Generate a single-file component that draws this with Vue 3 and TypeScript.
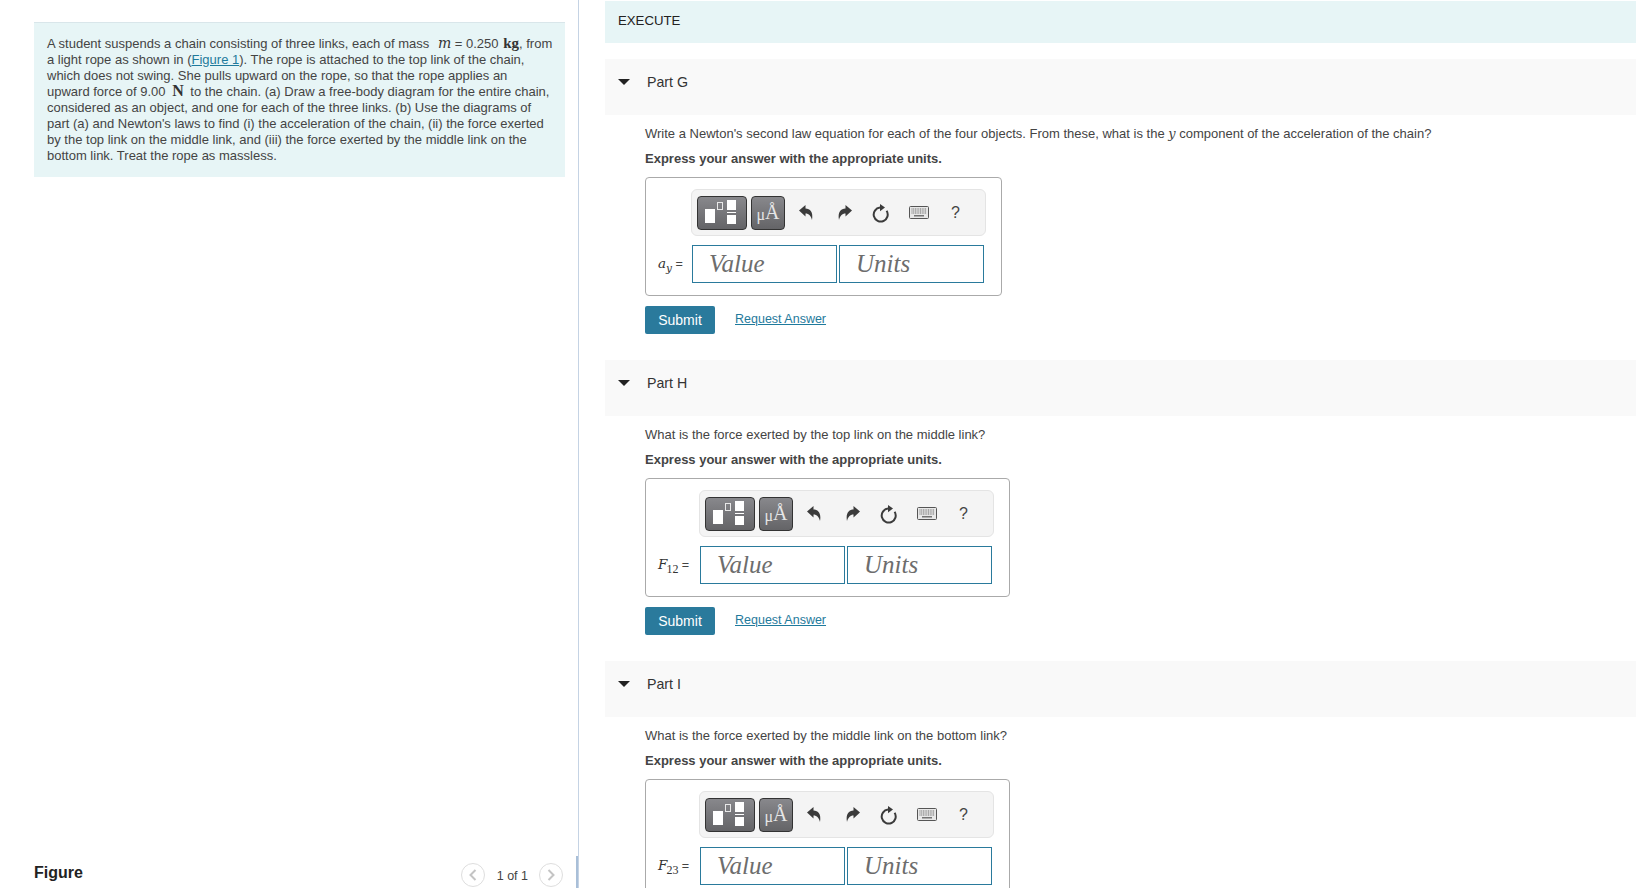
<script setup lang="ts">
interface Part {
  name: string;
  question: string;
  variable: string;
  sub: string;
  italicSub: boolean;
  wide: boolean;
  showActions: boolean;
}

const parts: Part[] = [
  {
    name: "Part G",
    question: "",
    variable: "a",
    sub: "y",
    italicSub: true,
    wide: false,
    showActions: true,
  },
  {
    name: "Part H",
    question: "What is the force exerted by the top link on the middle link?",
    variable: "F",
    sub: "12",
    italicSub: false,
    wide: true,
    showActions: true,
  },
  {
    name: "Part I",
    question: "What is the force exerted by the middle link on the bottom link?",
    variable: "F",
    sub: "23",
    italicSub: false,
    wide: true,
    showActions: false,
  },
];
</script>

<template>
  <div class="page">
    <aside class="left">
      <div class="intro">
        <div class="line">A student suspends a chain consisting of three links, each of mass <span class="math-i m">m</span> = 0.250 <span class="math unit kg">kg</span>, from</div>
        <div class="line">a light rope as shown in (<a class="link" href="#">Figure 1</a>). The rope is attached to the top link of the chain,</div>
        <div class="line">which does not swing. She pulls upward on the rope, so that the rope applies an</div>
        <div class="line">upward force of 9.00 <span class="math unit newton">N</span> to the chain. (a) Draw a free-body diagram for the entire chain,</div>
        <div class="line">considered as an object, and one for each of the three links. (b) Use the diagrams of</div>
        <div class="line">part (a) and Newton's laws to find (i) the acceleration of the chain, (ii) the force exerted</div>
        <div class="line">by the top link on the middle link, and (iii) the force exerted by the middle link on the</div>
        <div class="line">bottom link. Treat the rope as massless.</div>
      </div>
      <div class="figure-bar">
        <strong class="figure-title">Figure</strong>
        <div class="pager">
          <button type="button" class="round" aria-label="Previous">
            <svg width="10" height="14" viewBox="0 0 10 14"><path d="M7.5 2 L2.5 7 L7.5 12" fill="none" stroke="#c4c4c4" stroke-width="2" /></svg>
          </button>
          <span class="count">1 of 1</span>
          <button type="button" class="round" aria-label="Next">
            <svg width="10" height="14" viewBox="0 0 10 14"><path d="M2.5 2 L7.5 7 L2.5 12" fill="none" stroke="#c4c4c4" stroke-width="2" /></svg>
          </button>
        </div>
      </div>
    </aside>

    <main class="right">
      <div class="execute">EXECUTE</div>

      <section v-for="part in parts" :key="part.name" class="part">
        <header class="part-head">
          <span class="caret"></span>
          <span class="part-name">{{ part.name }}</span>
        </header>

        <div class="part-body">
          <p class="question">
            <template v-if="part.question">{{ part.question }}</template>
            <template v-else>Write a Newton's second law equation for each of the four objects. From these, what is the <span class="math-i m-y">y</span> component of the acceleration of the chain?</template>
          </p>
          <p class="express">Express your answer with the appropriate units.</p>

          <div class="answer" :class="{ wide: part.wide }">
            <div class="toolbar">
              <button type="button" class="tool tool-template" aria-label="Templates">
                <svg width="48" height="32" viewBox="0 0 48 32">
                  <rect x="7" y="12" width="10" height="14" fill="#fff" />
                  <rect x="19.5" y="5.5" width="5" height="7" fill="none" stroke="#e8e8e8" />
                  <rect x="29" y="3" width="9" height="10" fill="#fff" />
                  <rect x="29" y="15" width="9" height="1" fill="#fff" />
                  <rect x="29" y="18" width="9" height="9" fill="#fff" />
                </svg>
              </button>
              <button type="button" class="tool tool-units"><span class="mu">μ</span><span class="ang">Å</span></button>
              <svg class="icon undo" width="16" height="18" viewBox="0 0 16 18"><path d="M1 6.5 L7.5 1 V4.5 C12 4.5 15.5 8 14 16 C13 12 11 9.5 7.5 9.5 V12.5 Z" fill="#3b3b3b" /></svg>
              <svg class="icon redo" width="16" height="18" viewBox="0 0 16 18"><path d="M15 6.5 L8.5 1 V4.5 C4 4.5 0.5 8 2 16 C3 12 5 9.5 8.5 9.5 V12.5 Z" fill="#3b3b3b" /></svg>
              <svg class="icon reset" width="18" height="20" viewBox="0 0 18 20"><path d="M14.6 7.8 A7 7 0 1 1 8 4.6" fill="none" stroke="#3b3b3b" stroke-width="2" /><path d="M8 1 L13 4.6 L8 8.2 Z" fill="#3b3b3b" /></svg>
              <svg class="icon keys" width="20" height="13" viewBox="0 0 20 13">
                <rect x="0.5" y="0.5" width="19" height="12" rx="1" fill="#e8e8e8" stroke="#555" />
                <path d="M2.5 3 H17.5 M2.5 5 H17.5 M2.5 7 H17.5" stroke="#666" stroke-width="1.2" stroke-dasharray="1 0.7" />
                <path d="M5 9.8 H15" stroke="#555" stroke-width="1.2" />
              </svg>
              <span class="help">?</span>
            </div>
            <div class="fields">
              <span class="label">
                <span class="math-i var">{{ part.variable }}</span><sub class="sub" :class="part.italicSub ? 'math-i' : 'math upright'">{{ part.sub }}</sub> =
              </span>
              <input class="field" type="text" placeholder="Value" />
              <input class="field" type="text" placeholder="Units" />
            </div>
          </div>

          <div v-if="part.showActions" class="actions">
            <button type="button" class="submit">Submit</button>
            <a class="link request" href="#">Request Answer</a>
          </div>
        </div>
      </section>
    </main>
  </div>
</template>

<style>
html,
body {
  margin: 0;
  background: #fff;
  overflow: hidden;
}
</style>

<style scoped>
.page {
  display: flex;
  width: 1636px;
  height: 888px;
  overflow: hidden;
  font-family: "Liberation Sans", Arial, sans-serif;
  color: #444;
}
.left {
  box-sizing: border-box;
  width: 579px;
  height: 888px;
  flex: none;
  padding: 22px 0 0 34px;
  border-right: 1px solid #c5d3e4;
  display: flex;
  flex-direction: column;
  justify-content: space-between;
}
.intro {
  box-sizing: border-box;
  width: 531px;
  height: 155px;
  padding: 13px 14px 0 13px;
  background: #e7f5f6;
  border-top: 1px solid #d9e6ea;
  font-size: 13px;
  white-space: nowrap;
}
.line {
  height: 16px;
  line-height: 16px;
}
.math {
  font-family: "Liberation Serif", "Times New Roman", serif;
  line-height: 0;
}
.math-i {
  font-family: "DejaVu Serif", serif;
  font-style: italic;
  line-height: 0;
}
.m {
  font-size: 14px;
  margin-left: 5px;
  color: #333;
}
.unit {
  font-weight: 700;
  font-size: 15px;
  color: #333;
}
.kg {
  margin-left: 1px;
}
.newton {
  font-size: 16px;
  margin: 0 3px;
}
.link {
  color: #1f7a9c;
  text-decoration: underline;
}
.figure-bar {
  box-sizing: border-box;
  display: flex;
  align-items: center;
  justify-content: space-between;
  width: 544px;
  height: 32px;
  padding: 0 13px 0 0;
  border-right: 2px solid #a9bfd8;
}
.figure-title {
  margin: 2px 0 0 0;
  font-size: 16px;
  color: #222;
}
.pager {
  display: flex;
  align-items: center;
  gap: 10px;
  margin-top: 6px;
}
.round {
  box-sizing: border-box;
  display: flex;
  align-items: center;
  justify-content: center;
  width: 24px;
  height: 24px;
  padding: 0;
  border: 1px solid #dedede;
  border-radius: 50%;
  background: #fff;
}
.count {
  margin: 2px 1px 0 2px;
  font-size: 12.5px;
  color: #444;
}
.right {
  flex: 1;
  min-width: 0;
  padding-left: 26px;
}
.execute {
  box-sizing: border-box;
  height: 42px;
  margin-top: 1px;
  padding-left: 13px;
  background: #e7f5f6;
  font-size: 13.2px;
  line-height: 39px;
  color: #222;
}
.part {
  height: 301px;
  margin-top: 16px;
  margin-bottom: -16px;
}
.part-head {
  display: flex;
  align-items: center;
  height: 56px;
  padding-left: 13px;
  padding-bottom: 10px;
  box-sizing: border-box;
  background: #f9f9f9;
}
.caret {
  width: 0;
  height: 0;
  border-left: 6px solid transparent;
  border-right: 6px solid transparent;
  border-top: 6px solid #222;
}
.part-name {
  margin-left: 17px;
  font-size: 14.2px;
  color: #333;
}
.part-body {
  padding: 11px 0 0 40px;
}
.question {
  margin: 0;
  height: 25px;
  font-size: 13px;
  line-height: 15px;
  color: #444;
}
.m-y {
  font-size: 13px;
}
.express {
  margin: 0;
  height: 26px;
  font-size: 13px;
  line-height: 15px;
  font-weight: 700;
  color: #444;
}
.answer {
  box-sizing: border-box;
  width: 357px;
  height: 119px;
  padding: 11px 0 0 45px;
  border: 1px solid #aaa;
  border-radius: 4px;
}
.answer.wide {
  width: 365px;
  padding-left: 53px;
}
.toolbar {
  box-sizing: border-box;
  display: flex;
  align-items: center;
  width: 295px;
  height: 47px;
  padding-left: 5px;
  background: #f4f4f4;
  border: 1px solid #e4e4e4;
  border-radius: 6px;
}
.tool {
  box-sizing: border-box;
  height: 34px;
  padding: 0;
  border: 1px solid #333;
  border-radius: 4px;
  background: linear-gradient(#88888c, #646467);
  display: flex;
  align-items: center;
  justify-content: center;
}
.tool-template {
  width: 50px;
}
.tool-units {
  width: 34px;
  margin-left: 4px;
  font-family: "Liberation Serif", serif;
  color: #e6e6e6;
}
.mu {
  font-size: 16px;
  margin-top: 5px;
}
.ang {
  font-size: 20px;
}
.icon {
  flex: none;
}
.undo {
  margin-left: 13px;
}
.redo {
  margin-left: 23px;
}
.reset {
  margin-left: 19px;
}
.keys {
  margin-left: 19px;
}
.help {
  margin-left: 22px;
  font-size: 16px;
  color: #444;
}
.fields {
  display: flex;
  align-items: center;
  gap: 2px;
  margin-top: 9px;
  margin-left: -45px;
  padding-left: 12px;
}
.wide .fields {
  margin-left: -53px;
}
.label {
  width: 32px;
  flex: none;
  font-size: 12.6px;
  white-space: nowrap;
}
.wide .label {
  width: 40px;
}
.var {
  font-size: 13.5px;
  color: #333;
}
.sub {
  font-size: 10.5px;
  color: #333;
}
.sub.upright {
  font-size: 12px;
  margin-left: -1px;
}
.field {
  box-sizing: border-box;
  width: 145px;
  height: 38px;
  padding: 0 0 0 16px;
  border: 1px solid #2a7a9c;
  border-radius: 0;
  outline: none;
  background: #fff;
  font-family: "Liberation Serif", serif;
  font-style: italic;
  font-size: 25px;
}
.field::placeholder {
  color: #6d6d6d;
  opacity: 1;
}
.actions {
  display: flex;
  align-items: flex-start;
  gap: 20px;
  margin-top: 10px;
}
.submit {
  width: 70px;
  height: 28px;
  padding: 0;
  border: 0;
  border-radius: 2px;
  background: #2a7a9c;
  font-family: "Liberation Sans", Arial, sans-serif;
  font-size: 14px;
  color: #fff;
}
.request {
  margin-top: 6px;
  font-size: 12.5px;
  line-height: 15px;
}
</style>
